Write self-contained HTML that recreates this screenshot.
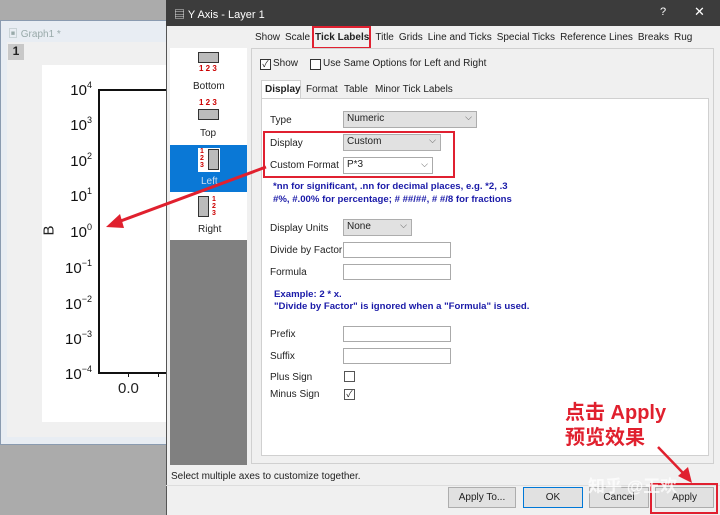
<!DOCTYPE html>
<html><head><meta charset="utf-8"><style>
*{box-sizing:border-box;margin:0;padding:0}
body{width:720px;height:515px;background:#ababab;position:relative;overflow:hidden;font-family:"Segoe UI","Liberation Sans","Noto Sans CJK SC",sans-serif;font-size:10px;color:#222}
.a{position:absolute}
.lbl{position:absolute;font-size:10px;color:#222}
.in{position:absolute;background:#fff;border:1px solid #aaa;height:16px}
.dd{position:absolute;background:#e1e1e1;border:1px solid #adadad;height:17px;padding:1px 3px;font-size:10px}
.dd:after{content:"⌵";position:absolute;right:4px;top:0;color:#555;font-size:9px}
.blue{position:absolute;color:#1a1aa8;font-weight:bold;font-size:9.6px}
.btn{position:absolute;top:487px;height:21px;background:#e1e1e1;border:1px solid #adadad;text-align:center;line-height:19px;font-size:10px}
.cb{position:absolute;width:11px;height:11px;border:1px solid #333;background:#fff;font-size:9px;line-height:9px;text-align:center}
.sup{font-size:9px;vertical-align:7px}
.ylab{position:absolute;font-family:"Liberation Sans",sans-serif;font-size:15px;color:#111;right:0}
</style></head><body>
<div class="a" style="left:0;top:20px;width:168px;height:425px;background:#e8edf3;border:1px solid #8a9bb0"></div>
<div class="a" style="left:8px;top:25px;color:#9aa;font-size:10px">▣ Graph1 *</div>
<div class="a" style="left:7px;top:42px;width:160px;height:395px;background:#f0f0f0"></div>
<div class="a" style="left:8px;top:44px;width:16px;height:16px;background:#c8c8c8;font-weight:bold;font-size:12px;text-align:center">1</div>
<div class="a" style="left:42px;top:65px;width:126px;height:357px;background:#fff"></div>
<div class="a" style="left:98px;top:89px;width:68px;height:2px;background:#111"></div>
<div class="a" style="left:98px;top:89px;width:2px;height:284px;background:#111"></div>
<div class="a" style="left:98px;top:372px;width:68px;height:2px;background:#111"></div>
<div class="a" style="left:128px;top:372px;width:1px;height:5px;background:#111"></div>
<div class="a" style="left:158px;top:372px;width:1px;height:5px;background:#111"></div>
<div class="a" style="left:0;top:0;width:92px;height:515px">
 <div class="ylab" style="top:80px">10<span class="sup">4</span></div>
 <div class="ylab" style="top:115px">10<span class="sup">3</span></div>
 <div class="ylab" style="top:151px">10<span class="sup">2</span></div>
 <div class="ylab" style="top:186px">10<span class="sup">1</span></div>
 <div class="ylab" style="top:222px">10<span class="sup">0</span></div>
 <div class="ylab" style="top:258px">10<span class="sup">−1</span></div>
 <div class="ylab" style="top:294px">10<span class="sup">−2</span></div>
 <div class="ylab" style="top:329px">10<span class="sup">−3</span></div>
 <div class="ylab" style="top:364px">10<span class="sup">−4</span></div>
</div>
<div class="a" style="left:44px;top:222px;font-family:'Liberation Sans';font-size:15px;transform:rotate(-90deg)">B</div>
<div class="a" style="left:118px;top:380px;font-family:'Liberation Sans';font-size:15px">0.0</div>

<div class="a" style="left:166px;top:0;width:554px;height:515px;background:#f0f0f0;border-left:1px solid #555"></div>
<div class="a" style="left:166px;top:0;width:554px;height:26px;background:#3c3c3c;color:#fff;font-size:11px;padding:6px 0 0 8px">▤ Y Axis - Layer 1<span style="position:absolute;left:494px;top:6px">?</span><span style="position:absolute;left:528px;top:4px;font-size:13px">✕</span></div>
<div class="a" style="left:255px;top:32px;font-size:10px">
<span style="margin-right:5px">Show</span><span style="margin-right:5px">Scale</span><b style="margin-right:6px">Tick Labels</b><span style="margin-right:5px">Title</span><span style="margin-right:5px">Grids</span><span style="margin-right:5px">Line and Ticks</span><span style="margin-right:5px">Special Ticks</span><span style="margin-right:5px">Reference Lines</span><span style="margin-right:5px">Breaks</span><span>Rug</span></div>
<div class="a" style="left:312px;top:26px;width:59px;height:23px;border:2px solid #e02030"></div>
<div class="a" style="left:251px;top:48px;width:463px;height:416px;border:1px solid #d0d0d0"></div>
<div class="a" style="left:170px;top:48px;width:77px;height:417px;background:#808080"></div>
<div class="a" style="left:170px;top:48px;width:77px;height:192px;background:#fff"></div>
<div class="a" style="left:170px;top:145px;width:77px;height:47px;background:#0a78d6"></div>
<div class="a" style="left:198px;top:52px;width:21px;height:11px;background:#bbb;border:1px solid #333"></div>
<div class="a" style="left:199px;top:64px;color:#c00;font-size:8px;font-weight:bold">1 2 3</div>
<div class="a" style="left:193px;top:81px">Bottom</div>
<div class="a" style="left:199px;top:98px;color:#c00;font-size:8px;font-weight:bold">1 2 3</div>
<div class="a" style="left:198px;top:109px;width:21px;height:11px;background:#bbb;border:1px solid #333"></div>
<div class="a" style="left:200px;top:128px">Top</div>
<div class="a" style="left:198px;top:148px;width:22px;height:24px;background:#fff"></div>
<div class="a" style="left:208px;top:149px;width:11px;height:21px;background:#bbb;border:1px solid #333"></div>
<div class="a" style="left:200px;top:148px;color:#c00;font-size:7px;font-weight:bold;line-height:7px">1<br>2<br>3</div>
<div class="a" style="left:201px;top:176px;color:#cde">Left</div>
<div class="a" style="left:198px;top:196px;width:11px;height:21px;background:#bbb;border:1px solid #333"></div>
<div class="a" style="left:212px;top:196px;color:#c00;font-size:7px;font-weight:bold;line-height:7px">1<br>2<br>3</div>
<div class="a" style="left:198px;top:224px">Right</div>
<div class="cb" style="left:260px;top:59px">✓</div><div class="lbl" style="left:273px;top:58px">Show</div>
<div class="cb" style="left:310px;top:59px"></div><div class="lbl" style="left:323px;top:58px">Use Same Options for Left and Right</div>
<div class="a" style="left:261px;top:80px;width:40px;height:19px;background:#fff;border:1px solid #d0d0d0;border-bottom:none"></div>
<div class="lbl" style="left:265px;top:84px;font-weight:bold">Display</div>
<div class="lbl" style="left:306px;top:84px">Format</div>
<div class="lbl" style="left:344px;top:84px">Table</div>
<div class="lbl" style="left:375px;top:84px">Minor Tick Labels</div>
<div class="a" style="left:261px;top:98px;width:448px;height:358px;background:#fff;border:1px solid #d0d0d0"></div>
<div class="lbl" style="left:270px;top:115px">Type</div><div class="dd" style="left:343px;top:111px;width:134px">Numeric</div>
<div class="lbl" style="left:270px;top:138px">Display</div><div class="dd" style="left:343px;top:134px;width:98px">Custom</div>
<div class="lbl" style="left:270px;top:160px">Custom Format</div><div class="in" style="left:343px;top:157px;width:90px;height:17px;padding:1px 3px">P*3<span style="position:absolute;right:4px;color:#555;font-size:9px">⌵</span></div>
<div class="a" style="left:263px;top:131px;width:192px;height:47px;border:2px solid #e02030"></div>
<div class="blue" style="left:273px;top:181px">*nn for significant, .nn for decimal places, e.g. *2, .3</div>
<div class="blue" style="left:273px;top:194px">#%, #.00% for percentage; # ##/##, # #/8 for fractions</div>
<div class="lbl" style="left:270px;top:223px">Display Units</div><div class="dd" style="left:343px;top:219px;width:69px">None</div>
<div class="lbl" style="left:270px;top:245px">Divide by Factor</div><div class="in" style="left:343px;top:242px;width:108px"></div>
<div class="lbl" style="left:270px;top:267px">Formula</div><div class="in" style="left:343px;top:264px;width:108px"></div>
<div class="blue" style="left:274px;top:289px">Example: 2 * x.</div>
<div class="blue" style="left:274px;top:301px">"Divide by Factor" is ignored when a "Formula" is used.</div>
<div class="lbl" style="left:270px;top:329px">Prefix</div><div class="in" style="left:343px;top:326px;width:108px"></div>
<div class="lbl" style="left:270px;top:351px">Suffix</div><div class="in" style="left:343px;top:348px;width:108px"></div>
<div class="lbl" style="left:270px;top:372px">Plus Sign</div><div class="cb" style="left:344px;top:371px;border-color:#555"></div>
<div class="lbl" style="left:270px;top:389px">Minus Sign</div><div class="cb" style="left:344px;top:389px;border-color:#555">✓</div>
<div class="lbl" style="left:171px;top:471px">Select multiple axes to customize together.</div>
<div class="a" style="left:166px;top:485px;width:554px;height:1px;background:#ddd"></div>
<div class="btn" style="left:448px;width:68px">Apply To...</div>
<div class="btn" style="left:523px;width:60px;border:1px solid #0078d7">OK</div>
<div class="btn" style="left:589px;width:60px">Cancel</div>
<div class="btn" style="left:655px;width:59px">Apply</div>
<div class="a" style="left:650px;top:483px;width:68px;height:31px;border:2px solid #e02030"></div>
<div class="a" style="left:588px;top:472px;color:rgba(255,255,255,.75);font-size:17px;font-weight:bold">知乎 @王欢</div>
<div class="a" style="left:565px;top:401px;color:#e0202e;font-size:20px;font-weight:bold;line-height:25px;font-family:'Liberation Sans','Noto Sans CJK SC',sans-serif">点击 Apply<br>预览效果</div>
<svg class="a" style="left:0;top:0" width="720" height="515">
<line x1="266" y1="167" x2="118" y2="222" stroke="#e0202e" stroke-width="3"/>
<polygon points="106,227 120,214 124,228" fill="#e0202e"/>
<line x1="658" y1="447" x2="684" y2="474" stroke="#e0202e" stroke-width="2.5"/>
<polygon points="692,483 678,476 688,467" fill="#e0202e"/>
</svg>
</body></html>
